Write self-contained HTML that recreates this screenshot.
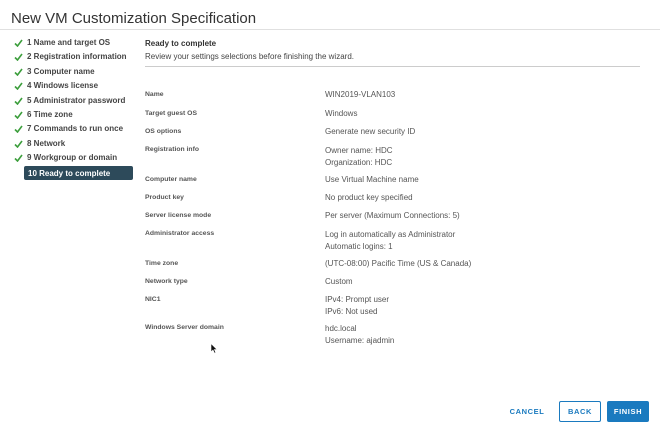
<!DOCTYPE html>
<html><head><style>
*{margin:0;padding:0;box-sizing:border-box}
body{width:660px;height:431px;background:#fff;font-family:"Liberation Sans",sans-serif;position:relative;overflow:hidden;color:#333}
.a{position:absolute;white-space:nowrap}
h1{position:absolute;left:11px;top:10px;font-size:15px;font-weight:normal;color:#333;white-space:nowrap}
.nav{position:absolute;left:14px;font-size:8px;font-weight:bold;color:#444;white-space:nowrap}
.nav svg{position:absolute;left:0;top:1px}
.nav span{position:absolute;left:13px;top:0;white-space:nowrap}
.lab{position:absolute;left:145px;font-size:6.8px;font-weight:bold;color:#555;white-space:nowrap}
.val{position:absolute;left:325px;font-size:8px;color:#555;line-height:11.5px;white-space:nowrap}
.btn{position:absolute;font-size:7.5px;font-weight:bold;letter-spacing:0.6px;text-align:center;line-height:21px}
</style></head><body>
<h1>New VM Customization Specification</h1>
<div class="a" style="left:0;top:29px;width:660px;height:1px;background:#e0e0e0"></div>

<div class="nav" style="top:38px"><svg width="9" height="8"><path d="M1 4.5L3.5 7L8 1" stroke="#3c9e3c" stroke-width="1.6" fill="none"/></svg><span>1 Name and target OS</span></div>
<div class="nav" style="top:52px"><svg width="9" height="8"><path d="M1 4.5L3.5 7L8 1" stroke="#3c9e3c" stroke-width="1.6" fill="none"/></svg><span>2 Registration information</span></div>
<div class="nav" style="top:67px"><svg width="9" height="8"><path d="M1 4.5L3.5 7L8 1" stroke="#3c9e3c" stroke-width="1.6" fill="none"/></svg><span>3 Computer name</span></div>
<div class="nav" style="top:81px"><svg width="9" height="8"><path d="M1 4.5L3.5 7L8 1" stroke="#3c9e3c" stroke-width="1.6" fill="none"/></svg><span>4 Windows license</span></div>
<div class="nav" style="top:96px"><svg width="9" height="8"><path d="M1 4.5L3.5 7L8 1" stroke="#3c9e3c" stroke-width="1.6" fill="none"/></svg><span>5 Administrator password</span></div>
<div class="nav" style="top:110px"><svg width="9" height="8"><path d="M1 4.5L3.5 7L8 1" stroke="#3c9e3c" stroke-width="1.6" fill="none"/></svg><span>6 Time zone</span></div>
<div class="nav" style="top:124px"><svg width="9" height="8"><path d="M1 4.5L3.5 7L8 1" stroke="#3c9e3c" stroke-width="1.6" fill="none"/></svg><span>7 Commands to run once</span></div>
<div class="nav" style="top:139px"><svg width="9" height="8"><path d="M1 4.5L3.5 7L8 1" stroke="#3c9e3c" stroke-width="1.6" fill="none"/></svg><span>8 Network</span></div>
<div class="nav" style="top:153px"><svg width="9" height="8"><path d="M1 4.5L3.5 7L8 1" stroke="#3c9e3c" stroke-width="1.6" fill="none"/></svg><span>9 Workgroup or domain</span></div>
<div class="a" style="left:24px;top:166px;width:109px;height:14px;background:#2d4a5a;border-radius:2px;color:#fff;font-size:8px;font-weight:bold;padding:3px 0 0 4px">10 Ready to complete</div>

<div class="a" style="left:145px;top:39px;font-size:8px;font-weight:bold;color:#333">Ready to complete</div>
<div class="a" style="left:145px;top:52px;font-size:8px;color:#444">Review your settings selections before finishing the wizard.</div>
<div class="a" style="left:145px;top:66px;width:495px;height:1px;background:#ccc"></div>

<div class="lab" style="top:91px">Name</div><div class="val" style="top:89px">WIN2019-VLAN103</div>
<div class="lab" style="top:110px">Target guest OS</div><div class="val" style="top:108px">Windows</div>
<div class="lab" style="top:128px">OS options</div><div class="val" style="top:126px">Generate new security ID</div>
<div class="lab" style="top:146px">Registration info</div><div class="val" style="top:145px">Owner name: HDC<br>Organization: HDC</div>
<div class="lab" style="top:176px">Computer name</div><div class="val" style="top:174px">Use Virtual Machine name</div>
<div class="lab" style="top:194px">Product key</div><div class="val" style="top:192px">No product key specified</div>
<div class="lab" style="top:212px">Server license mode</div><div class="val" style="top:210px">Per server (Maximum Connections: 5)</div>
<div class="lab" style="top:230px">Administrator access</div><div class="val" style="top:229px">Log in automatically as Administrator<br>Automatic logins: 1</div>
<div class="lab" style="top:260px">Time zone</div><div class="val" style="top:258px">(UTC-08:00) Pacific Time (US &amp; Canada)</div>
<div class="lab" style="top:278px">Network type</div><div class="val" style="top:276px">Custom</div>
<div class="lab" style="top:296px">NIC1</div><div class="val" style="top:294px">IPv4: Prompt user<br>IPv6: Not used</div>
<div class="lab" style="top:324px">Windows Server domain</div><div class="val" style="top:323px">hdc.local<br>Username: ajadmin</div>

<svg class="a" style="left:210px;top:343px" width="8" height="11"><path d="M1 0.5V9L3 7L4.5 10.2L5.8 9.6L4.4 6.6H7Z" fill="#111" stroke="#fff" stroke-width="0.6"/></svg>

<div class="btn" style="left:505px;top:401px;width:44px;color:#1a7abf">CANCEL</div>
<div class="btn" style="left:559px;top:401px;width:42px;height:21px;border:1px solid #1a7abf;border-radius:2px;color:#1a7abf;line-height:19px">BACK</div>
<div class="btn" style="left:607px;top:401px;width:42px;height:21px;background:#1a7abf;border-radius:2px;color:#fff">FINISH</div>
</body></html>
